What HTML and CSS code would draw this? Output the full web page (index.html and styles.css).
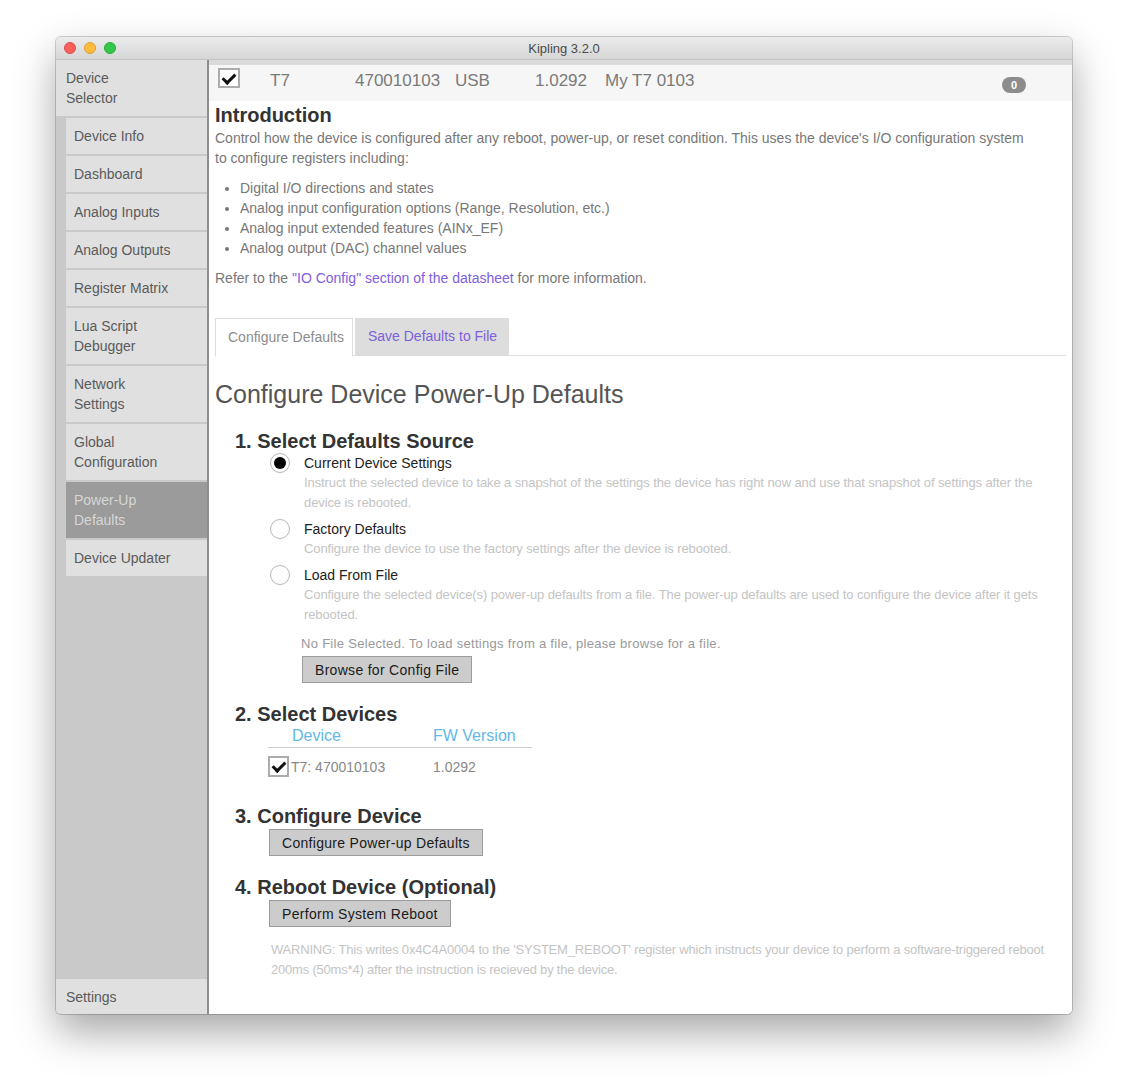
FILE: index.html
```html
<!DOCTYPE html>
<html lang="en">
<head>
    <meta charset="UTF-8">
    <title>Kipling 3.2.0</title>
    <link rel="stylesheet" href="styles.css">
</head>
<body>
    <div class="window">
        <div class="titlebar">
            <div class="lights">
                <span class="light red"></span>
                <span class="light yellow"></span>
                <span class="light green"></span>
            </div>
            <div class="title">Kipling 3.2.0</div>
        </div>
        <div class="app">
            <nav class="sidebar">
                <div class="nav-top">Device<br>Selector</div>
                <div class="nav-item">Device Info</div>
                <div class="nav-item">Dashboard</div>
                <div class="nav-item">Analog Inputs</div>
                <div class="nav-item">Analog Outputs</div>
                <div class="nav-item">Register Matrix</div>
                <div class="nav-item">Lua Script<br>Debugger</div>
                <div class="nav-item">Network<br>Settings</div>
                <div class="nav-item">Global<br>Configuration</div>
                <div class="nav-item active">Power-Up<br>Defaults</div>
                <div class="nav-item">Device Updater</div>
                <div class="nav-settings">Settings</div>
            </nav>
            <main class="content">
                <div class="device-bar">
                    <span class="checkbox checked"></span>
                    <span class="cell cell-type">T7</span>
                    <span class="cell cell-serial">470010103</span>
                    <span class="cell cell-conn">USB</span>
                    <span class="cell cell-fw">1.0292</span>
                    <span class="cell cell-name">My T7 0103</span>
                    <span class="badge">0</span>
                </div>
                <div class="page">
                    <h2 class="intro-title">Introduction</h2>
                    <p class="intro-text">Control how the device is configured after any reboot, power-up, or reset condition. This uses the device's I/O configuration system to configure registers including:</p>
                    <ul class="intro-list">
                        <li>Digital I/O directions and states</li>
                        <li>Analog input configuration options (Range, Resolution, etc.)</li>
                        <li>Analog input extended features (AINx_EF)</li>
                        <li>Analog output (DAC) channel values</li>
                    </ul>
                    <p class="intro-ref">Refer to the <a href="#">"IO Config" section of the datasheet</a> for more information.</p>

                    <div class="tabs">
                        <div class="tab active">Configure Defaults</div>
                        <div class="tab">Save Defaults to File</div>
                    </div>

                    <h1 class="page-title">Configure Device Power-Up Defaults</h1>

                    <div class="steps">
                        <h3 class="step-title">1. Select Defaults Source</h3>
                        <div class="options">
                            <div class="option">
                                <span class="radio checked"></span>
                                <div class="option-body">
                                    <div class="option-label">Current Device Settings</div>
                                    <div class="option-desc">Instruct the selected device to take a snapshot of the settings the device has right now and use that snapshot of settings after the device is rebooted.</div>
                                </div>
                            </div>
                            <div class="option">
                                <span class="radio"></span>
                                <div class="option-body">
                                    <div class="option-label">Factory Defaults</div>
                                    <div class="option-desc">Configure the device to use the factory settings after the device is rebooted.</div>
                                </div>
                            </div>
                            <div class="option">
                                <span class="radio"></span>
                                <div class="option-body">
                                    <div class="option-label">Load From File</div>
                                    <div class="option-desc">Configure the selected device(s) power-up defaults from a file. The power-up defaults are used to configure the device after it gets rebooted.</div>
                                </div>
                            </div>
                            <div class="file-status">No File Selected. To load settings from a file, please browse for a file.</div>
                            <button class="btn">Browse for Config File</button>
                        </div>

                        <h3 class="step-title">2. Select Devices</h3>
                        <table class="device-table">
                            <thead>
                                <tr>
                                    <th class="col-check"></th>
                                    <th class="col-device">Device</th>
                                    <th class="col-fw">FW Version</th>
                                </tr>
                            </thead>
                            <tbody>
                                <tr>
                                    <td class="col-check"><span class="checkbox small checked"></span></td>
                                    <td class="col-device">T7: 470010103</td>
                                    <td class="col-fw">1.0292</td>
                                </tr>
                            </tbody>
                        </table>

                        <h3 class="step-title">3. Configure Device</h3>
                        <div class="step-body">
                            <button class="btn">Configure Power-up Defaults</button>
                        </div>

                        <h3 class="step-title">4. Reboot Device (Optional)</h3>
                        <div class="step-body">
                            <button class="btn">Perform System Reboot</button>
                            <p class="warning">WARNING: This writes 0x4C4A0004 to the 'SYSTEM_REBOOT' register which instructs your device to perform a software-triggered reboot 200ms (50ms*4) after the instruction is recieved by the device.</p>
                        </div>
                    </div>
                </div>
            </main>
        </div>
    </div>
</body>
</html>
```

FILE: styles.css
```css
body {
    margin: 0;
    background-color: #ffffff;
    font-family: "Liberation Sans", Arial, sans-serif;
    width: 1128px;
    height: 1088px;
    overflow: hidden;
}
.window {
    margin: 37px 0 0 56px;
    width: 1016px;
    height: 977px;
    border-radius: 5px;
    overflow: hidden;
    display: flex;
    flex-direction: column;
    box-shadow: 0 0 0 1px rgba(0, 0, 0, 0.18), 0 18px 40px rgba(0, 0, 0, 0.35);
}
.titlebar {
    height: 23px;
    flex-shrink: 0;
    display: flex;
    align-items: center;
    background: linear-gradient(#ebebeb, #d6d6d6);
    border-bottom: 1px solid #c4c4c4;
    box-sizing: border-box;
}
.lights {
    display: flex;
    gap: 8px;
    padding-left: 8px;
}
.light {
    width: 12px;
    height: 12px;
    border-radius: 50%;
    box-sizing: border-box;
}
.red {
    background-color: #fc605c;
    border: 1px solid #de4a45;
}
.yellow {
    background-color: #fdbc40;
    border: 1px solid #dea032;
}
.green {
    background-color: #34c84a;
    border: 1px solid #27aa35;
}
.title {
    flex: 1;
    text-align: center;
    font-size: 13px;
    color: #4a4a4a;
    margin-right: 60px;
}
.app {
    flex: 1;
    display: flex;
    min-height: 0;
}
.sidebar {
    width: 151px;
    flex-shrink: 0;
    display: flex;
    flex-direction: column;
    background-color: #c9c9c9;
    border-right: 2px solid #8d8d8d;
    font-size: 14px;
    line-height: 20px;
    color: #5a5a5a;
}
.nav-top {
    background-color: #e0e0e0;
    padding: 8px 10px;
}
.nav-item {
    background-color: #e0e0e0;
    margin: 2px 0 0 10px;
    padding: 8px 8px;
}
.nav-item.active {
    background-color: #9b9b9b;
    color: #d6d6d6;
}
.nav-settings {
    margin-top: auto;
    background-color: #e0e0e0;
    padding: 0 10px;
    height: 35px;
    line-height: 36px;
}
.content {
    flex: 1;
    background-color: #ffffff;
    overflow: hidden;
}
.device-bar {
    height: 36px;
    border-top: 5px solid #dadada;
    background-color: #f6f6f6;
    display: flex;
    align-items: center;
    font-size: 17px;
    color: #7a7a7a;
}
.device-bar .cell {
    position: relative;
    top: -2px;
}
.device-bar .checkbox {
    margin: 0 30px 0 9px;
    position: relative;
    top: -5px;
}
.checkbox {
    width: 22px;
    height: 20px;
    border: 2px solid #acacac;
    background-color: #ffffff;
    box-sizing: border-box;
    display: inline-block;
    position: relative;
}
.checkbox.checked::after {
    content: "";
    position: absolute;
    left: 5px;
    top: 1px;
    width: 5px;
    height: 10px;
    border: solid #111111;
    border-width: 0 3px 3px 0;
    transform: rotate(45deg);
}
.cell-type {
    width: 85px;
}
.cell-serial {
    width: 100px;
}
.cell-conn {
    width: 80px;
}
.cell-fw {
    width: 70px;
}
.cell-name {
    flex: 1;
}
.badge {
    background-color: #8c8c8c;
    color: #ffffff;
    font-size: 11px;
    font-weight: bold;
    border-radius: 8px;
    width: 24px;
    height: 16px;
    line-height: 16px;
    text-align: center;
    margin-right: 46px;
    position: relative;
    top: 2px;
}
.page {
    padding: 0 6px;
}
.intro-title {
    font-size: 20px;
    line-height: 24px;
    color: #333333;
    margin: 2px 0 0;
}
.intro-text {
    font-size: 14px;
    line-height: 20px;
    color: #777777;
    margin: 1px 0 0;
    max-width: 810px;
}
.intro-list {
    font-size: 14px;
    line-height: 20px;
    color: #777777;
    margin: 10px 0 0;
    padding-left: 25px;
}
.intro-ref {
    font-size: 14px;
    line-height: 20px;
    color: #777777;
    margin: 10px 0 0;
}
.intro-ref a {
    color: #8060e0;
    text-decoration: none;
}
.tabs {
    display: flex;
    gap: 2px;
    margin-top: 30px;
    border-bottom: 1px solid #dddddd;
    height: 37px;
}
.tab {
    padding: 0 12px 0 13px;
    line-height: 37px;
    font-size: 14px;
    color: #7c5fdc;
    background-color: #dddddd;
}
.tab.active {
    padding: 0 8px 0 12px;
    color: #8c8c8c;
    background-color: #ffffff;
    border: 1px solid #dddddd;
    border-bottom-color: #ffffff;
    height: 37px;
    line-height: 37px;
}
.page-title {
    font-size: 25px;
    line-height: 32px;
    font-weight: normal;
    color: #555555;
    margin: 22px 0 0;
}
.steps {
    padding-left: 20px;
}
.step-title {
    font-size: 20px;
    line-height: 24px;
    color: #333333;
    margin: 19px 0 0;
}
.options {
    padding-left: 35px;
}
.option {
    display: flex;
    gap: 14px;
    margin-bottom: 6px;
}
.radio {
    width: 20px;
    height: 20px;
    flex-shrink: 0;
    border-radius: 50%;
    border: 1px solid #b4b4b4;
    box-sizing: border-box;
    background-color: #ffffff;
    position: relative;
}
.radio.checked::after {
    content: "";
    position: absolute;
    left: 3px;
    top: 3px;
    width: 12px;
    height: 12px;
    border-radius: 50%;
    background-color: #000000;
}
.option-label {
    font-size: 14px;
    line-height: 20px;
    color: #222222;
}
.option-desc {
    font-size: 13px;
    line-height: 20px;
    color: #c4c4c4;
    letter-spacing: -0.1px;
}
.file-status {
    font-size: 13px;
    line-height: 20px;
    color: #999999;
    letter-spacing: 0.3px;
    margin: 9px 0 0 31px;
}
.btn {
    display: block;
    height: 27px;
    padding: 0 12px;
    border: 1px solid #9c9c9c;
    background-color: #cccccc;
    font-family: "Liberation Sans", Arial, sans-serif;
    font-size: 14px;
    letter-spacing: 0.3px;
    color: #1a1a1a;
    border-radius: 0;
}
.options .btn {
    margin: 2px 0 0 32px;
}
.device-table {
    margin-left: 33px;
    border-collapse: collapse;
    font-size: 14px;
}
.device-table th {
    font-size: 16px;
    font-weight: normal;
    color: #62b8e6;
    text-align: left;
    height: 20px;
    padding: 0 0 1px;
    border-bottom: 1px solid #cccccc;
}
.device-table td {
    color: #888888;
    padding: 8px 0 8px;
}
.device-table .col-check {
    width: 23px;
}
.device-table .col-device {
    width: 141px;
}
.device-table th.col-device {
    padding-left: 1px;
}
.device-table .col-fw {
    width: 99px;
}
.checkbox.small {
    width: 21px;
    height: 21px;
    vertical-align: middle;
}
.step-body {
    padding-left: 34px;
}
.step-body .btn {
    margin-top: 1px;
}
.warning {
    font-size: 13px;
    line-height: 20px;
    color: #c4c4c4;
    letter-spacing: -0.2px;
    margin: 13px 0 0 2px;
}
```
